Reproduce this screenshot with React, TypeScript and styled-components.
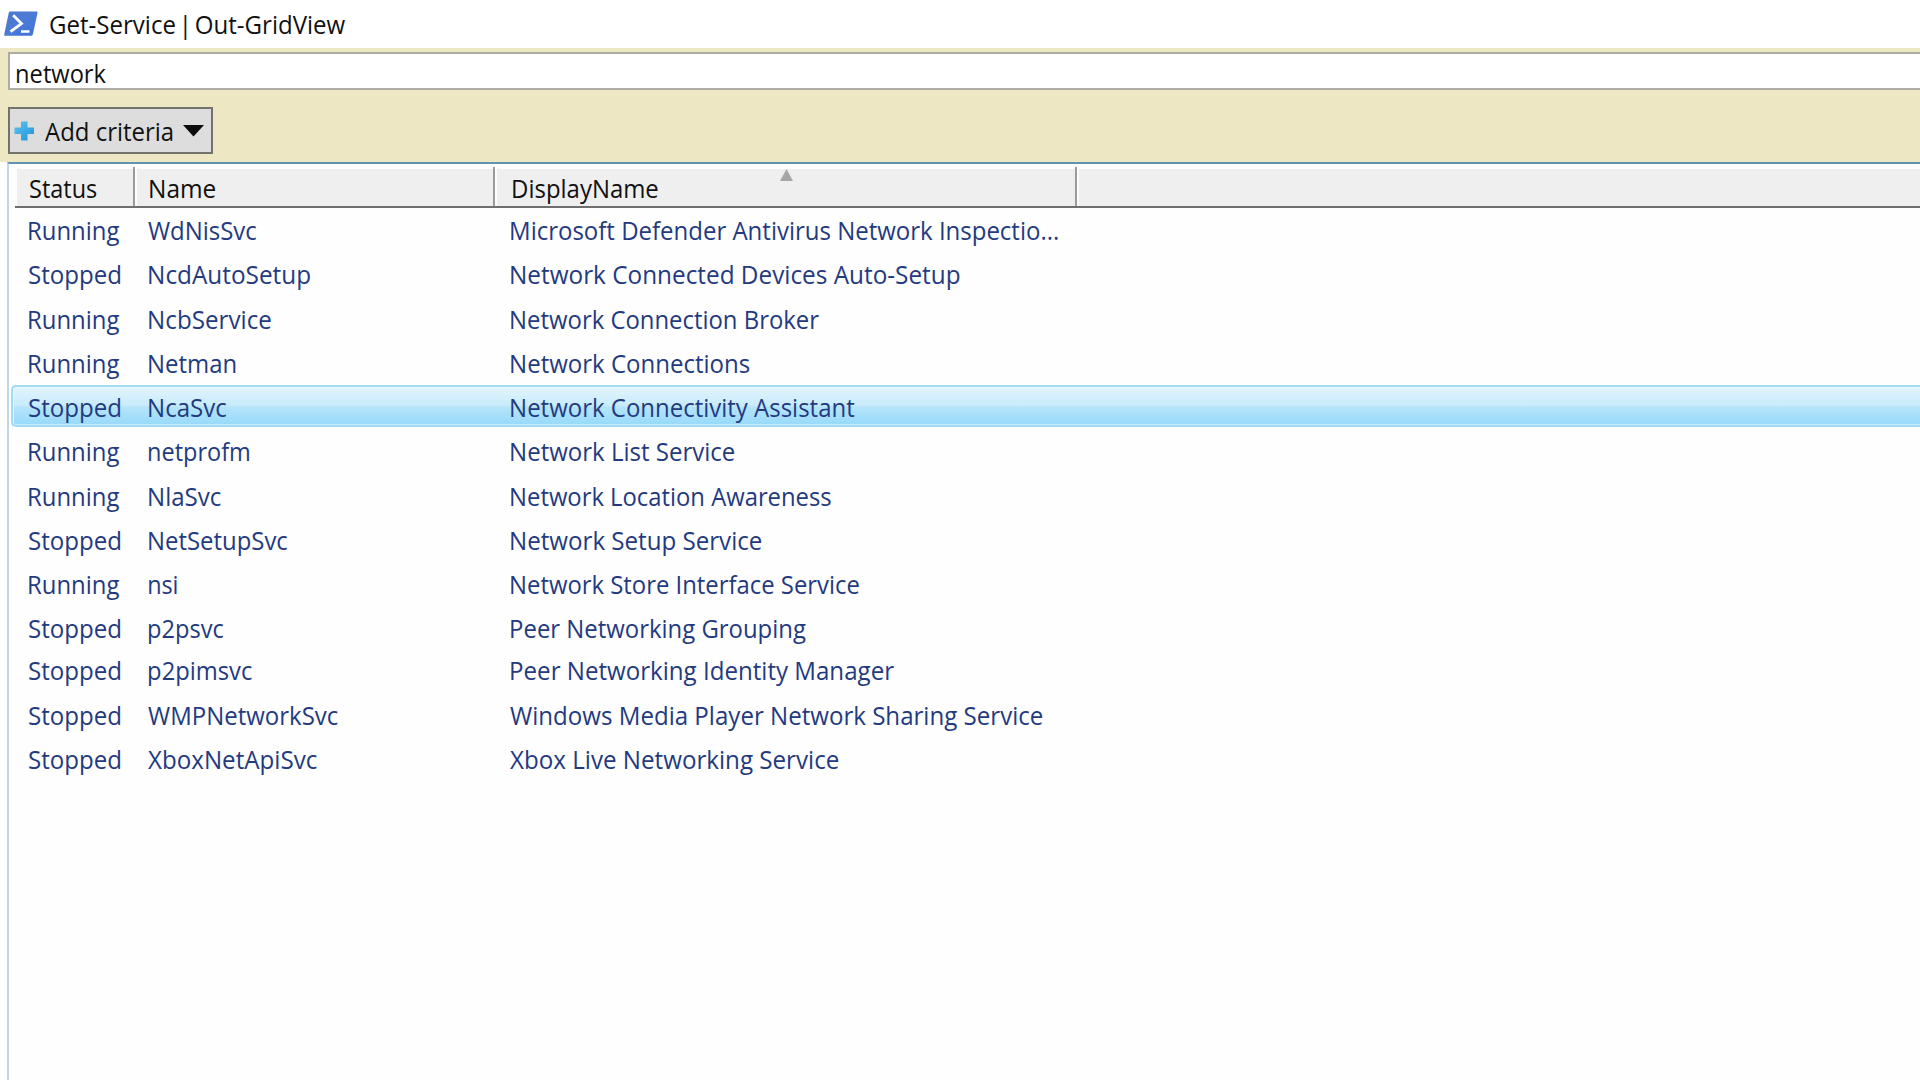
import React from "react";
import styled, { createGlobalStyle, css } from "styled-components";

const FONT = '"Open Sans", "Noto Sans", sans-serif';
const TEXT_SIZE = 25;

const GlobalStyle = createGlobalStyle`
  body {
    margin: 0;
    background: #fff;
    overflow: hidden;
  }
  *, *::before, *::after { box-sizing: border-box; }
`;

const Window = styled.div`
  width: 1920px;
  height: 1080px;
  display: flex;
  flex-direction: column;
  overflow: hidden;
  background: #fefefe;
  color: #111;
  font-family: ${FONT};
  font-size: ${TEXT_SIZE}px;
`;

const TitleBar = styled.header`
  height: 48px;
  flex: none;
  display: flex;
  align-items: center;
  padding-left: 4px;
  background: #fff;
`;

const Title = styled.h1`
  margin: 0 0 0 12px;
  font-size: inherit;
  font-weight: 400;
  line-height: 48px;
`;

const FilterPanel = styled.section`
  height: 114px;
  flex: none;
  display: flex;
  flex-direction: column;
  align-items: flex-start;
  padding: 4px 0 0 8px;
  background: #ede7c3;
`;

const SearchBox = styled.div`
  width: 1920px;
  height: 38px;
  display: flex;
  align-items: center;
  padding: 4px 0 0 7px;
  border: 2px solid #acaba4;
  background: #fff;
  line-height: 30px;
`;

const CriteriaButton = styled.button`
  width: 205px;
  height: 47px;
  margin-top: 17px;
  display: flex;
  align-items: center;
  padding: 1px 0 0 4px;
  border: 2px solid #73736e;
  background: #dddddd;
  color: inherit;
  font: inherit;
  line-height: 38px;
`;

const ButtonLabel = styled.span`
  width: 138px;
  margin-left: 11px;
  text-align: left;
`;

const Results = styled.section`
  flex: 1;
  margin-left: 7px;
  border-top: 2px solid #5f93ae;
  border-left: 2px solid #c0d7e5;
  background: #fefefe;
`;

const COLUMNS = "120px 360px 582px 1fr";

const HeaderRow = styled.div`
  display: grid;
  grid-template-columns: ${COLUMNS};
  grid-template-rows: 39px;
  height: 44px;
  margin-left: 6px;
  padding-top: 3px;
  border-bottom: 2px solid #6f6f6f;
`;

const HeaderCell = styled.div<{ $pad: number; $last?: boolean }>`
  position: relative;
  padding: 3px 0 0 ${(p) => p.$pad}px;
  line-height: 37px;
  background: linear-gradient(#fefefe 0 2px, #efefef 2px);
  border-left: 2px solid #fdfdfd;
  ${(p) =>
    !p.$last &&
    css`
      border-right: 2px solid #9b9b9b;
    `}
`;

const SortArrow = styled.svg`
  position: absolute;
  left: 283px;
  top: 2px;
`;

const Rows = styled.div`
  padding-left: 2px;
  color: #243a80;
`;

const Row = styled.div<{ $selected?: boolean; $tight?: boolean }>`
  display: grid;
  grid-template-columns: 120px 362px 1fr;
  height: 42px;
  margin-bottom: ${(p) => (p.$tight ? 0 : 2.25)}px;
  padding: 1px 0 0 16px;
  border: 2px solid transparent;
  border-right: 0;
  border-radius: 5px 0 0 5px;
  line-height: 38px;
  ${(p) =>
    p.$selected &&
    css`
      border-color: #a3dcf2;
      background: linear-gradient(#e2f4fc, #c8ebfb 48%, #b4e4fa 54%, #97dafa) padding-box;
      box-shadow: inset 1px 1px 0 #e8f8fe, inset 0 -1px 0 #c4ecfb;
    `}
`;

const Ink = styled.span<{ $gap: number }>`
  display: inline-block;
  white-space: pre;
  word-spacing: ${(p) => p.$gap}px;
  transform-origin: 0 50%;
`;

const ruler = document.createElement("canvas").getContext("2d")!;

/** Condenses a label so that its inked part spans `width` pixels from the cell's edge. */
function Fit({ width, gap = 0, children }: { width: number; gap?: number; children: string }) {
  ruler.font = `${TEXT_SIZE}px ${FONT}`;
  const m = ruler.measureText(children);
  const left = -m.actualBoundingBoxLeft;
  const ink = m.actualBoundingBoxRight - left + gap * (children.split(" ").length - 1);
  const scale = (width - 0.7) / ink;
  // Diagonal capitals (W, X) have almost no side bearing and sit slightly further left.
  const nudge = /^[WX]/.test(children) ? -1 : 0;
  return (
    <Ink
      $gap={gap}
      style={{ transform: `translateX(${nudge - left * scale}px) scaleX(${scale})` }}
    >
      {children}
    </Ink>
  );
}

type Service = {
  status: "Running" | "Stopped";
  name: [string, number];
  display: [string, number];
};

const services: Service[] = [
  { status: "Running", name: ["WdNisSvc", 109.5], display: ["Microsoft Defender Antivirus Network Inspectio...", 547.5] },
  { status: "Stopped", name: ["NcdAutoSetup", 161.5], display: ["Network Connected Devices Auto-Setup", 449] },
  { status: "Running", name: ["NcbService", 122.5], display: ["Network Connection Broker", 308.5] },
  { status: "Running", name: ["Netman", 87.5], display: ["Network Connections", 239] },
  { status: "Stopped", name: ["NcaSvc", 78.5], display: ["Network Connectivity Assistant", 344.5] },
  { status: "Running", name: ["netprofm", 101.5], display: ["Network List Service", 224] },
  { status: "Running", name: ["NlaSvc", 73], display: ["Network Location Awareness", 320.5] },
  { status: "Stopped", name: ["NetSetupSvc", 139.5], display: ["Network Setup Service", 251] },
  { status: "Running", name: ["nsi", 29], display: ["Network Store Interface Service", 348.5] },
  { status: "Stopped", name: ["p2psvc", 75.5], display: ["Peer Networking Grouping", 296] },
  { status: "Stopped", name: ["p2pimsvc", 104], display: ["Peer Networking Identity Manager", 383.5] },
  { status: "Stopped", name: ["WMPNetworkSvc", 191], display: ["Windows Media Player Network Sharing Service", 533] },
  { status: "Stopped", name: ["XboxNetApiSvc", 170], display: ["Xbox Live Networking Service", 329] },
];

const PowerShellIcon = () => (
  <svg width="34" height="26" viewBox="0 0 34 26">
    <defs>
      <linearGradient id="ps" x1="0" y1="0" x2="1" y2="1">
        <stop offset="0" stopColor="#4a78cc" />
        <stop offset="0.5" stopColor="#4b7bd6" />
        <stop offset="1" stopColor="#3f72d6" />
      </linearGradient>
    </defs>
    <path d="M6.200 .6h26.300q1.300 0 1 1.300L28.800 23.500q-.3 1.300-1.600 1.300H1.200q-1.300 0-1-1.300L4.700 1.900Q5 .6 6.200 .6z" fill="url(#ps)" />
    <path d="M9.200 4.200l8.300 8.300L6.500 20.700" fill="none" stroke="#fff" strokeWidth="2.800" />
    <path d="M17 20.500h8.500" stroke="#fff" strokeWidth="2.500" />
  </svg>
);

const PlusIcon = () => (
  <svg width="20" height="20" viewBox="0 0 20 20">
    <defs>
      <linearGradient id="plus" x1="0" y1="0" x2="1" y2="1">
        <stop offset="0" stopColor="#5cc3f0" />
        <stop offset="1" stopColor="#1f93d8" />
      </linearGradient>
    </defs>
    <path d="M7 .5h6.500v6H20v6.500h-6.500v6.500H7V13H.5V6.500H7z" fill="url(#plus)" />
  </svg>
);

export default function App() {
  return (
    <>
      <GlobalStyle />
      <Window>
        <TitleBar>
          <PowerShellIcon />
          <Title>
            <Fit width={296.5} gap={-3.5}>Get-Service | Out-GridView</Fit>
          </Title>
        </TitleBar>
        <FilterPanel>
          <SearchBox>
            <Fit width={89.5}>network</Fit>
          </SearchBox>
          <CriteriaButton>
            <PlusIcon />
            <ButtonLabel>
              <Fit width={128}>Add criteria</Fit>
            </ButtonLabel>
            <svg width="21" height="12" viewBox="0 0 21 12">
              <path d="M0 0h21L10.500 11.500z" fill="#0c0c0c" />
            </svg>
          </CriteriaButton>
        </FilterPanel>
        <Results>
          <HeaderRow>
            <HeaderCell $pad={13}>
              <Fit width={67}>Status</Fit>
            </HeaderCell>
            <HeaderCell $pad={13}>
              <Fit width={66}>Name</Fit>
            </HeaderCell>
            <HeaderCell $pad={16}>
              <Fit width={145.5}>DisplayName</Fit>
              <SortArrow width="13" height="12" viewBox="0 0 13 12">
                <path d="M6.500 0L13 12H0z" fill="#a6a6a6" />
              </SortArrow>
            </HeaderCell>
            <HeaderCell $pad={0} $last />
          </HeaderRow>
          <Rows>
            {services.map((s, i) => (
              <Row key={s.name[0]} $selected={i === 4} $tight={i === 9}>
                <span>
                  <Fit width={s.status === "Running" ? 91.5 : 92.5}>{s.status}</Fit>
                </span>
                <span>
                  <Fit width={s.name[1]}>{s.name[0]}</Fit>
                </span>
                <span>
                  <Fit width={s.display[1]}>{s.display[0]}</Fit>
                </span>
              </Row>
            ))}
          </Rows>
        </Results>
      </Window>
    </>
  );
}
